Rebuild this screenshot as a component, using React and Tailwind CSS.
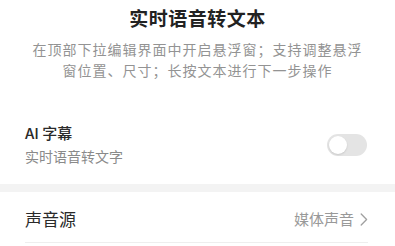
import React, { useState } from "react";

const App = () => {
  const [enabled, setEnabled] = useState(false);

  return (
    <div
      className="w-[395px] h-[246px] bg-white overflow-hidden"
      style={{ fontFamily: '"Noto Sans CJK SC", "Noto Sans", sans-serif' }}
    >
      {/* Header */}
      <div className="pt-[5px] text-center">
        <h1 className="text-[19px] leading-[26px] font-bold tracking-[0.5px] text-[#222]">
          实时语音转文本
        </h1>
        <p className="mt-[8px] text-[14px] leading-[21px] tracking-[1px] text-[#939393]">
          在顶部下拉编辑界面中开启悬浮窗；支持调整悬浮
          <br />
          窗位置、尺寸；长按文本进行下一步操作
        </p>
      </div>

      {/* AI subtitle toggle */}
      <div className="mt-[42px] pl-[25px] pr-[28px] flex items-center justify-between">
        <div>
          <p className="text-[15px] leading-[20px] font-medium text-[#2a2a2a]">AI 字幕</p>
          <p className="mt-[3px] text-[14px] leading-[20px] text-[#8a8a8a]">实时语音转文字</p>
        </div>
        <button
          type="button"
          onClick={() => setEnabled(!enabled)}
          className={`relative w-[40px] h-[22px] rounded-full ${enabled ? "bg-[#3a7bf6]" : "bg-[#e4e4e4]"}`}
        >
          <span
            className={`absolute top-[2px] w-[18px] h-[18px] rounded-full bg-white shadow-[0_1px_2px_rgba(0,0,0,0.12)] ${enabled ? "left-[20px]" : "left-[2px]"}`}
          />
        </button>
      </div>

      <div className="mt-[18px] h-[8px] bg-[#f3f3f3]" />

      {/* Sound source */}
      <div className="ml-[25px] mr-[27px] pt-[15px] pb-[11px] border-b border-[#eeeeee] flex items-center justify-between">
        <span className="text-[17px] leading-[24px] text-[#2a2a2a]">声音源</span>
        <div className="flex items-center gap-[6px]">
          <span className="text-[15px] leading-[24px] text-[#999]">媒体声音</span>
          <svg width="8" height="13" viewBox="0 0 8 13" fill="none">
            <path d="M1.2 1 L6.6 6.5 L1.2 12" stroke="#a0a0a0" strokeWidth="1.3" strokeLinecap="round" strokeLinejoin="round" />
          </svg>
        </div>
      </div>
    </div>
  );
};

export default App;
